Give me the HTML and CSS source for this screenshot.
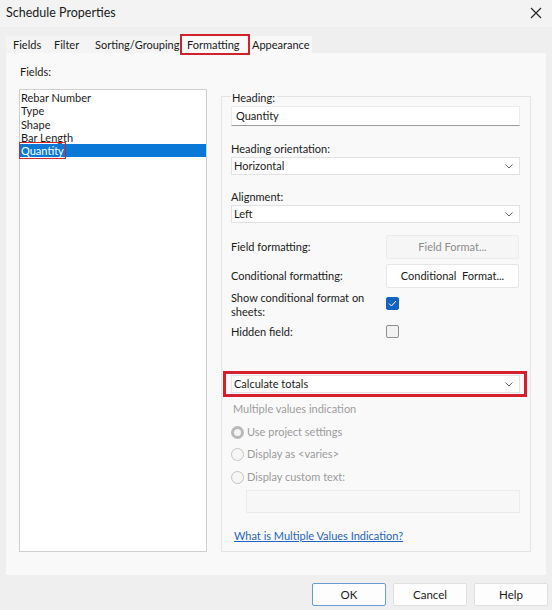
FILE: index.html
```html
<!DOCTYPE html>
<html>
<head>
<meta charset="utf-8">
<link rel="stylesheet" href="styles.css">
</head>
<body>
<div class="dialog">
  <div class="titlebar">
    <span class="title">Schedule Properties</span>
    <svg class="close" width="12" height="12" viewBox="0 0 12 12"><path d="M1 1 L11 11 M11 1 L1 11" stroke="#222" stroke-width="1.1" fill="none"/></svg>
  </div>
  <div class="tabs">
    <div class="tab t1">Fields</div>
    <div class="tab t2">Filter</div>
    <div class="tab t3">Sorting/Grouping</div>
    <div class="tab t4 active">Formatting</div>
    <div class="tab t5">Appearance</div>
  </div>
  <div class="panel">
    <div class="fields-label">Fields:</div>
    <div class="content">
      <div class="listbox">
        <div class="item">Rebar Number</div>
        <div class="item">Type</div>
        <div class="item">Shape</div>
        <div class="item">Bar Length</div>
        <div class="item selected"><span class="hl">Quantity</span></div>
      </div>
      <div class="group">
        <div class="legend">Heading:</div>
        <div class="textbox">Quantity</div>
        <div class="label lbl-orient">Heading orientation:</div>
        <div class="select">Horizontal<svg class="chev" width="8" height="5" viewBox="0 0 8 5"><path d="M0.5 0.5 L4 4 L7.5 0.5" stroke="#666" fill="none"/></svg></div>
        <div class="label lbl-align">Alignment:</div>
        <div class="select">Left<svg class="chev" width="8" height="5" viewBox="0 0 8 5"><path d="M0.5 0.5 L4 4 L7.5 0.5" stroke="#666" fill="none"/></svg></div>
        <div class="row row-ff">
          <span class="rlabel">Field formatting:</span>
          <div class="btn disabled">Field Format...</div>
        </div>
        <div class="row row-cf">
          <span class="rlabel">Conditional formatting:</span>
          <div class="btn">Conditional&nbsp; Format...</div>
        </div>
        <div class="row row-show">
          <span class="rlabel multi">Show conditional format on sheets:</span>
          <span class="check checked"><svg width="9" height="7" viewBox="0 0 9 7"><path d="M1 3.5 L3.5 6 L8 1" stroke="#fff" stroke-width="1" fill="none"/></svg></span>
        </div>
        <div class="row row-hidden">
          <span class="rlabel">Hidden field:</span>
          <span class="check"></span>
        </div>
        <div class="redbox">
          <div class="select calc">Calculate totals<svg class="chev" width="8" height="5" viewBox="0 0 8 5"><path d="M0.5 0.5 L4 4 L7.5 0.5" stroke="#666" fill="none"/></svg></div>
        </div>
        <div class="mvi">Multiple values indication</div>
        <div class="radio r1"><span class="dot on"></span>Use project settings</div>
        <div class="radio r2"><span class="dot"></span>Display as &lt;varies&gt;</div>
        <div class="radio r3"><span class="dot"></span>Display custom text:</div>
        <div class="customtext"></div>
        <a class="link">What is Multiple Values Indication?</a>
      </div>
    </div>
  </div>
  <div class="footer">
    <div class="fbtn ok">OK</div>
    <div class="fbtn">Cancel</div>
    <div class="fbtn">Help</div>
  </div>
</div>
</body>
</html>
```
FILE: styles.css
```css
* { box-sizing: border-box; }
html, body { margin: 0; padding: 0; }
body {
  width: 552px;
  height: 610px;
  background: #efefef;
  font-family: "Lato", "Noto Sans", sans-serif;
  font-size: 11px;
  color: #1a1a1a;
  overflow: hidden;
}
.dialog { display: flex; flex-direction: column; height: 610px; }
.titlebar {
  height: 27px;
  background: #f3f3f3;
  display: flex;
  align-items: center;
  justify-content: space-between;
  padding: 0 10px 2px 6px;
}
.title { font-size: 12.5px; color: #1a1a1a; }
.close { display: block; }

.tabs {
  display: flex;
  padding-left: 6px;
  margin-top: 9px;
  height: 17px;
}
.tab {
  height: 17px;
  line-height: 17px;
  padding-left: 7px;
  background: #f4f4f4;
  white-space: nowrap;
}
.t1 { width: 41px; }
.t2 { width: 41px; }
.t3 { width: 94px; }
.t4 { width: 66px; }
.t5 { width: 64px; padding-left: 4px; background: #f8f8f8; }
.tab.active {
  background: #f9f9f9;
  outline: 2px solid #d2202c;
  outline-offset: 0px;
  padding-left: 5px;
  position: relative;
  z-index: 1;
}

.panel {
  margin: 0 6px;
  height: 522px;
  background: #f9f9f9;
  padding: 11px 0 0 13px;
}
.fields-label { line-height: 16px; padding-left: 1px; }
.content { display: flex; margin-top: 9px; align-items: flex-start; }

.listbox {
  width: 188px;
  height: 463px;
  background: #fff;
  border: 1px solid #cfcfcf;
  padding-top: 1px;
}
.item { height: 13.3px; line-height: 13.3px; padding-left: 1px; white-space: nowrap; }
.item.selected { background: #0a78d7; color: #fff; }
.hl { outline: 1px solid #d0242e; outline-offset: 1px; }

.group {
  width: 310px;
  height: 456px;
  margin-left: 14px;
  margin-top: 7px;
  border: 1px solid #e4e4e4;
  padding: 0 10px 0 9px;
}
.legend {
  display: block;
  width: max-content;
  margin-top: -7px;
  line-height: 16px;
  background: #f9f9f9;
  padding: 0 2px 0 1px;
}
.textbox {
  height: 20px;
  background: #fff;
  border: 1px solid #ececec;
  border-bottom: 1px solid #9a9a9a;
  line-height: 18px;
  padding-left: 4px;
}
.label { line-height: 16px; }
.lbl-orient { margin-top: 15px; }
.lbl-align { margin-top: 14px; }
.select {
  height: 18px;
  background: #fff;
  border: 1px solid #e2e2e2;
  line-height: 16px;
  padding-left: 2px;
  display: flex;
  justify-content: space-between;
  align-items: center;
  padding-right: 6px;
}
.chev { display: block; }

.row { display: flex; align-items: center; }
.rlabel { width: 155px; line-height: 14px; }
.row-ff { margin-top: 12px; }
.row-cf { margin-top: 5px; }
.btn {
  width: 133px;
  height: 24px;
  line-height: 22px;
  text-align: center;
  background: #fff;
  border: 1px solid #e6e6e6;
  border-radius: 2px;
}
.btn.disabled { background: #f6f6f6; color: #8d8d8d; border-color: #ececec; }
.row-show { margin-top: 3px; align-items: flex-start; }
.row-show .check { margin-top: 6px; }
.rlabel.multi { width: 155px; }
.row-hidden { margin-top: 6px; }
.row-hidden .check { margin-top: -2px; }
.check {
  width: 13px;
  height: 13px;
  border: 1px solid #8f8f8f;
  border-radius: 2px;
  background: #f2f2f2;
  display: flex;
  align-items: center;
  justify-content: center;
}
.check.checked { background: #1363c3; border-color: #1363c3; }
.check svg { display: block; }

.redbox {
  margin-top: 32px;
  margin-left: -8px;
  width: 304px;
  border: 3px solid #d61f2c;
  padding: 1px 4px 1px 5px;
}
.calc { height: 18px; }
.mvi { margin-top: 4px; padding-left: 2px; line-height: 16px; color: #9d9d9d; }
.radio { display: flex; align-items: center; line-height: 16px; color: #9b9b9b; }
.r1 { margin-top: 7px; }
.r2 { margin-top: 6px; }
.r3 { margin-top: 7px; }
.dot {
  width: 13px;
  height: 13px;
  border-radius: 50%;
  border: 1px solid #c4c4c4;
  background: #f6f6f6;
  margin-right: 3px;
}
.dot.on {
  border: 3.5px solid #b9b9b9;
  background: #f4f4f4;
}
.customtext {
  margin-top: 5px;
  margin-left: 15px;
  height: 23px;
  border: 1px solid #ececec;
  background: #f7f7f7;
}
.link {
  display: block;
  margin-top: 15px;
  padding-left: 3px;
  line-height: 16px;
  color: #1f64c0;
  text-decoration: underline;
}

.footer {
  display: flex;
  justify-content: flex-end;
  gap: 7px;
  margin-top: 8px;
  padding-right: 4px;
}
.fbtn {
  width: 74px;
  height: 23px;
  line-height: 21px;
  text-align: center;
  background: #fdfdfd;
  border: 1px solid #e0e0e0;
  border-radius: 2px;
  font-size: 11.5px;
}
.fbtn.ok { border-color: #6a9ad4; }
```
